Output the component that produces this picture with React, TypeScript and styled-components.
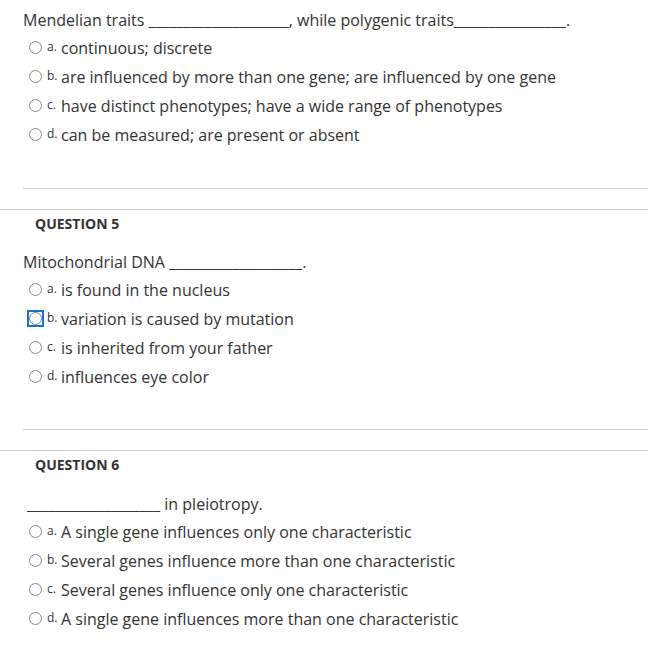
import React from "react";
import styled, { createGlobalStyle } from "styled-components";

const Global = createGlobalStyle`
  html, body { margin: 0; padding: 0; background: #fff; }
  body { font-family: "Open Sans", "Noto Sans", sans-serif; color: #333; }
`;

const Page = styled.div`
  width: 648px;
  padding-top: 10px;
`;

const Section = styled.div`
  padding-left: 23px;
`;

const Prompt = styled.div<{ $indent?: number }>`
  font-size: 16px;
  line-height: 20px;
  height: 20px;
  padding-left: ${(p) => p.$indent ?? 0}px;
  white-space: nowrap;
`;

const Options = styled.ul`
  list-style: none;
  margin: 3px 0 0 0;
  padding: 0 0 0 6px;
`;

const Row = styled.li`
  height: 29px;
  display: flex;
  align-items: center;
  font-size: 16px;
  white-space: nowrap;
`;

const RadioWrap = styled.span<{ $focus?: boolean }>`
  width: 17px;
  height: 17px;
  box-sizing: border-box;
  display: inline-flex;
  align-items: center;
  justify-content: center;
  margin-left: -2px;
  border: 2px solid ${(p) => (p.$focus ? "#1474d4" : "transparent")};
`;

const Radio = styled.span`
  width: 13px;
  height: 13px;
  box-sizing: border-box;
  border-radius: 50%;
  border: 1px solid #8a8a8a;
  background: #fff;
`;

const Letter = styled.span`
  font-size: 12px;
  line-height: 12px;
  margin-left: 3px;
  width: 14px;
  position: relative;
  top: -1px;
`;

const Text = styled.span`
  line-height: 20px;
`;

const InsetRule = styled.hr`
  border: 0;
  border-top: 1px solid #cfcfcf;
  margin: 0 0 0 23px;
`;

const FullRule = styled.hr`
  border: 0;
  border-top: 1px solid #cfcfcf;
  margin: 20px 0 0 0;
`;

const Header = styled.div`
  font-size: 14px;
  font-weight: 700;
  line-height: 16px;
  padding-left: 35px;
  margin-top: 6px;
  color: #333;
`;

type Q = {
  prompt: React.ReactNode;
  options: string[];
  focus?: number;
  indent?: number;
};

const Question: React.FC<Q> = ({ prompt, options, focus, indent }) => (
  <Section>
    <Prompt $indent={indent}>{prompt}</Prompt>
    <Options>
      {options.map((o, i) => (
        <Row key={i}>
          <RadioWrap $focus={focus === i}>
            <Radio />
          </RadioWrap>
          <Letter>{"abcd"[i]}.</Letter>
          <Text>{o}</Text>
        </Row>
      ))}
    </Options>
  </Section>
);

const Gap = styled.div<{ $h: number }>`
  height: ${(p) => p.$h}px;
`;

export default function App() {
  return (
    <Page>
      <Global />
      <Question
        prompt={
          <>
            Mendelian traits ____________________, while polygenic traits________________.
          </>
        }
        options={[
          "continuous; discrete",
          "are influenced by more than one gene; are influenced by one gene",
          "have distinct phenotypes; have a wide range of phenotypes",
          "can be measured; are present or absent",
        ]}
      />
      <Gap $h={39} />
      <InsetRule />
      <FullRule />
      <Header>QUESTION 5</Header>
      <Gap $h={20} />
      <Question
        prompt={<>Mitochondrial DNA ___________________.</>}
        options={[
          "is found in the nucleus",
          "variation is caused by mutation",
          "is inherited from your father",
          "influences eye color",
        ]}
        focus={1}
      />
      <Gap $h={38} />
      <InsetRule />
      <FullRule />
      <Header>QUESTION 6</Header>
      <Gap $h={21} />
      <Question
        indent={4}
        prompt={<>___________________ in pleiotropy.</>}
        options={[
          "A single gene influences only one characteristic",
          "Several genes influence more than one characteristic",
          "Several genes influence only one characteristic",
          "A single gene influences more than one characteristic",
        ]}
      />
    </Page>
  );
}
